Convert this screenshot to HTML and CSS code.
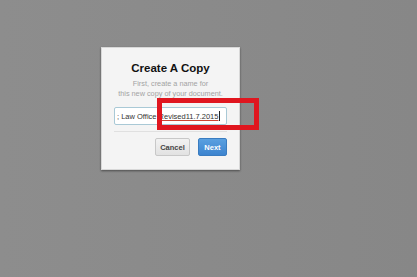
FILE: index.html
```html
<!DOCTYPE html>
<html>
<head>
<meta charset="utf-8">
<link rel="stylesheet" href="styles.css">
</head>
<body>
<div class="stage">
  <div class="dialog">
    <h1 class="title">Create A Copy</h1>
    <p class="subtitle">First, create a name for<br>this new copy of your document.</p>
    <div class="field"><span class="field-text">; Law Office <u class="spell">Revised11.7.2015</u></span><span class="caret"></span></div>
    <div class="divider"></div>
    <div class="actions">
      <button class="btn btn-cancel">Cancel</button>
      <button class="btn btn-next">Next</button>
    </div>
  </div>
  <div class="highlight"></div>
</div>
</body>
</html>
```
FILE: styles.css
```css
html, body {
  margin: 0;
  padding: 0;
}
body {
  width: 417px;
  height: 277px;
  overflow: hidden;
  background: linear-gradient(90deg, #8d8d8d 0%, #8a8a8a 50%, #878787 100%);
  font-family: "Liberation Sans", Arial, sans-serif;
}
.stage {
  position: relative;
  width: 417px;
  height: 277px;
  padding: 47px 0 0 101px;
  box-sizing: border-box;
}
.dialog {
  width: 139px;
  height: 123px;
  box-sizing: border-box;
  background: #f4f4f4;
  border: 1px solid #d8d8d8;
  box-shadow: 0 1px 2px rgba(0,0,0,0.45);
  display: flex;
  flex-direction: column;
  align-items: center;
  padding: 13px 12px 0 12px;
}
.title {
  margin: 0;
  font-size: 11.5px;
  font-weight: bold;
  color: #111;
  line-height: 14px;
}
.subtitle {
  margin: 4px 0 0 0;
  font-size: 7.3px;
  line-height: 10px;
  color: #a3a3a3;
  text-align: center;
  white-space: nowrap;
}
.field {
  margin-top: 8px;
  align-self: stretch;
  height: 18px;
  box-sizing: border-box;
  border: 1px solid #a9c9d6;
  border-radius: 2px;
  background: #fff;
  overflow: hidden;
  display: flex;
  align-items: center;
  padding-left: 2px;
  white-space: nowrap;
}
.field-text {
  font-size: 7.5px;
  color: #333;
}
.spell {
  text-decoration: underline;
  text-decoration-color: #c43;
}
.caret {
  width: 1px;
  height: 10px;
  background: #222;
  margin-left: 1px;
}
.divider {
  align-self: stretch;
  height: 1px;
  background: #e0e0e0;
  margin-top: 6px;
}
.actions {
  align-self: stretch;
  display: flex;
  justify-content: flex-end;
  gap: 8px;
  margin-top: 6px;
}
.btn {
  height: 18px;
  box-sizing: border-box;
  font-family: "Liberation Sans", Arial, sans-serif;
  font-size: 7.5px;
  font-weight: bold;
  border-radius: 2px;
  padding: 0;
  cursor: pointer;
}
.btn-cancel {
  width: 35px;
  background: linear-gradient(#f2f2f2, #e2e2e2);
  border: 1px solid #c8c8c8;
  color: #444;
}
.btn-next {
  width: 29px;
  background: linear-gradient(#5aa0e0, #3d84cf);
  border: 1px solid #3a7cc0;
  color: #fff;
}
.highlight {
  position: absolute;
  left: 157px;
  top: 98px;
  width: 102px;
  height: 32px;
  box-sizing: border-box;
  border: 5px solid #e0161f;
}
```
